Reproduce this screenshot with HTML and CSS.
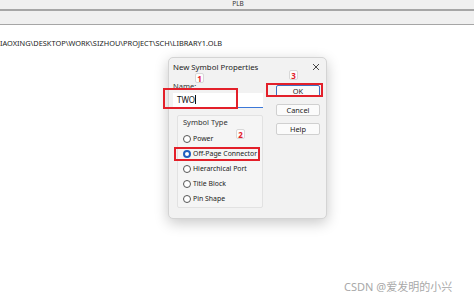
FILE: index.html
```html
<!DOCTYPE html>
<html lang="en">
<head>
    <meta charset="UTF-8">
    <title>New Symbol Properties</title>
    <link rel="stylesheet" href="styles.css">
</head>
<body>
    <div class="tabbar">PLB</div>
    <div class="toolbar"></div>
    <div class="path">IAOXING\DESKTOP\WORK\SIZHOU\PROJECT\SCH\LIBRARY1.OLB</div>

    <div class="dialog">
        <div class="title-row">
            <span>New Symbol Properties</span>
            <svg class="close" width="8" height="8" viewBox="0 0 8 8">
                <path d="M1 1 L7 7 M7 1 L1 7" stroke="#333" stroke-width="0.9" fill="none"/>
            </svg>
        </div>
        <div class="dialog-body">
            <div class="left-col">
                <div class="label">Name:</div>
                <div class="input">TWO<span class="caret"></span></div>
                <div class="group">
                    <div class="group-title">Symbol Type</div>
                    <div class="radio"><span class="dot"></span>Power</div>
                    <div class="radio"><span class="dot checked"></span>Off-Page Connector</div>
                    <div class="radio"><span class="dot"></span>Hierarchical Port</div>
                    <div class="radio"><span class="dot"></span>Title Block</div>
                    <div class="radio"><span class="dot"></span>Pin Shape</div>
                </div>
            </div>
            <div class="right-col">
                <div class="btn default">OK</div>
                <div class="btn">Cancel</div>
                <div class="btn">Help</div>
            </div>
        </div>
    </div>

    <!-- annotations drawn over the screenshot -->
    <div class="mark mark-name"></div>
    <div class="mark mark-ok"></div>
    <div class="mark mark-offpage"></div>
    <div class="badge badge-1">1</div>
    <div class="badge badge-2">2</div>
    <div class="badge badge-3">3</div>

    <div class="watermark">CSDN @爱发明的小兴</div>
</body>
</html>
```

FILE: styles.css
```css
* {
    margin: 0;
    padding: 0;
    box-sizing: border-box;
}

body {
    width: 474px;
    height: 299px;
    overflow: hidden;
    position: relative;
    background-color: #ffffff;
    font-family: 'Noto Sans', 'Open Sans', sans-serif;
    font-size: 7.5px;
    color: #1c1c1c;
}

.tabbar {
    height: 11px;
    background-color: #f0f0f0;
    border-bottom: 2px solid #a6a6a6;
    text-align: center;
    font-size: 6.5px;
    line-height: 8px;
    color: #333;
    padding-left: 2px;
}

.toolbar {
    height: 14px;
    background-color: #f0f0f0;
    border-bottom: 1px solid #a6a6a6;
}

.path {
    margin-top: 13px;
    height: 10px;
    line-height: 10px;
    font-size: 7.4px;
    color: #222;
    white-space: nowrap;
}

.dialog {
    width: 159px;
    height: 162px;
    margin: 9px 0 0 168px;
    background-color: #f2f2f2;
    border: 1px solid #d4d4d4;
    border-radius: 5px;
    box-shadow: 0 4px 14px rgba(0,0,0,0.22);
}

.title-row {
    display: flex;
    justify-content: space-between;
    align-items: center;
    height: 18px;
    padding: 0 6px 0 4px;
    font-size: 7.8px;
}

.dialog-body {
    display: flex;
    padding: 5px 0 0 4px;
}

.left-col {
    width: 90px;
}

.label {
    height: 10px;
    line-height: 10px;
    color: #333;
}

.input {
    height: 15px;
    line-height: 14px;
    background-color: #ffffff;
    border-bottom: 1px solid #3c78d8;
    padding-left: 4px;
    margin-top: 2px;
    font-size: 8px;
    color: #111;
}

.caret {
    display: inline-block;
    width: 1px;
    height: 9px;
    background-color: #111;
    vertical-align: -1px;
}

.group {
    margin: 7px 0 0 4px;
    height: 93px;
    border: 1px solid #e2e2e2;
    border-radius: 2px;
    background-color: #f5f5f5;
    padding: 1px 0 0 5px;
}

.group-title {
    height: 10px;
    line-height: 10px;
    margin-bottom: 4px;
    color: #333;
}

.radio {
    display: flex;
    align-items: center;
    gap: 2px;
    height: 15px;
    white-space: nowrap;
    font-size: 6.9px;
    color: #222;
}

.dot {
    flex: none;
    width: 8px;
    height: 8px;
    border: 1px solid #555;
    border-radius: 50%;
    background-color: #ffffff;
}

.dot.checked {
    border: 2.5px solid #1f5fbf;
}

.right-col {
    margin-left: 13px;
    display: flex;
    flex-direction: column;
    gap: 7px;
    padding-top: 4px;
}

.btn {
    width: 44px;
    height: 12px;
    line-height: 11px;
    text-align: center;
    background-color: #fbfbfb;
    border: 1px solid #d0d0d0;
    border-radius: 2px;
    font-size: 7.4px;
    color: #222;
}

.btn.default {
    border-color: #3f6fc0;
}

.mark {
    position: absolute;
    border: 2px solid #e3202a;
}

.mark-name {
    left: 163px;
    top: 88px;
    width: 75px;
    height: 21px;
}

.mark-ok {
    left: 266px;
    top: 83px;
    width: 57px;
    height: 14px;
}

.mark-offpage {
    left: 174px;
    top: 147px;
    width: 86px;
    height: 14px;
}

.badge {
    position: absolute;
    width: 9px;
    height: 10px;
    line-height: 10px;
    text-align: center;
    font-size: 8px;
    font-weight: bold;
    color: #e3202a;
    background-color: #fdfdfd;
    border: 1px solid #d8d8d8;
    border-radius: 2px;
}

.badge-1 {
    left: 195px;
    top: 73px;
}

.badge-2 {
    left: 236px;
    top: 129px;
}

.badge-3 {
    left: 289px;
    top: 70px;
}

.watermark {
    position: absolute;
    left: 344px;
    top: 278px;
    font-family: 'Noto Sans', 'Noto Sans CJK SC', sans-serif;
    font-size: 11px;
    color: #a8a8a8;
    white-space: nowrap;
}
```
